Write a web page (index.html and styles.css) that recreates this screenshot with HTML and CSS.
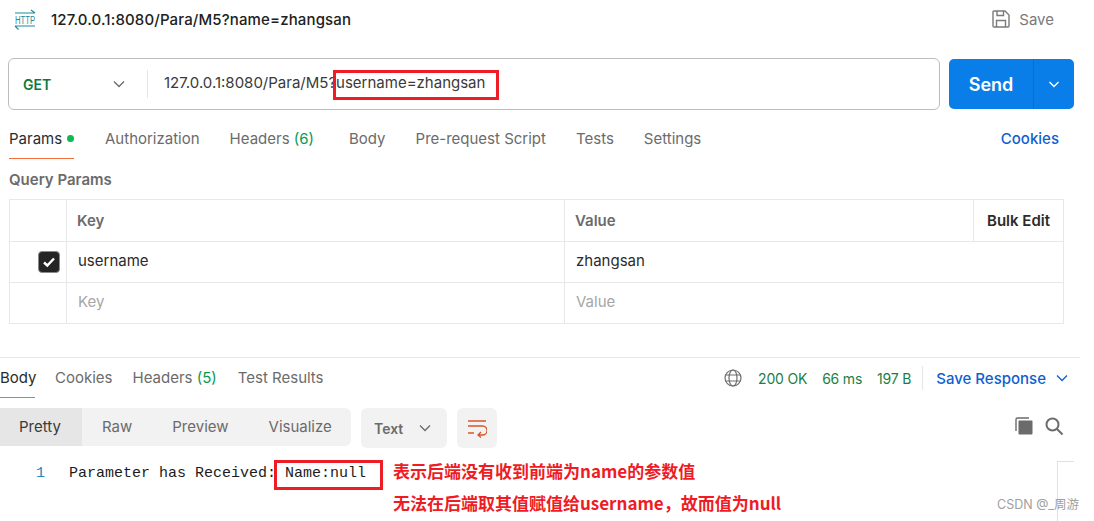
FILE: index.html
```html
<!DOCTYPE html>
<html lang="zh">
<head>
<meta charset="utf-8">
<title>Postman</title>
<link rel="stylesheet" href="styles.css">
</head>
<body>
<div class="page">
  <header class="head">
    <svg class="http-icon" width="24" height="24" viewBox="0 0 24 24" fill="none" stroke="#1f8a9c" stroke-width="1.100">
      <path d="M1 6h20M17 3l4 3M1 19h20M1 19l3.500 3.500"/>
      <text transform="translate(1 16.500) scale(.67 1)" class="http-text">HTTP</text>
    </svg>
    <span class="title">127.0.0.1:8080/Para/M5?name=zhangsan</span>
    <span class="save">
      <svg width="18" height="18" viewBox="0 0 18 18" fill="none" stroke="#7a7a7a" stroke-width="1.400">
        <path d="M1 2a1 1 0 0 1 1-1h11l4 4v11a1 1 0 0 1-1 1H2a1 1 0 0 1-1-1z"/>
        <path d="M5 1v4.500h6.500V1M4.500 17v-6.500h9V17"/>
      </svg>
      Save
    </span>
  </header>

  <section class="url-row">
    <div class="url-box">
      <div class="method"><span>GET</span>
        <svg class="chev" width="12" height="12" viewBox="0 0 12 12" fill="none" stroke="#6b6b6b" stroke-width="1.300"><path d="M1 3.500l5 5 5-5"/></svg>
      </div>
      <div class="url">127.0.0.1:8080/Para/M5?username=zhangsan</div>
    </div>
    <div class="send">
      <span class="send-label">Send</span>
      <span class="send-more"><svg width="12" height="12" viewBox="0 0 12 12" fill="none" stroke="#fff" stroke-width="1.300"><path d="M1.500 4l4.500 4.500L10.500 4"/></svg></span>
    </div>
  </section>

  <nav class="req-tabs">
    <span class="tab active">Params <i class="dot"></i></span>
    <span class="tab t-auth">Authorization</span>
    <span class="tab t-head">Headers <em>(6)</em></span>
    <span class="tab t-body">Body</span>
    <span class="tab t-pre">Pre-request Script</span>
    <span class="tab t-tests">Tests</span>
    <span class="tab t-set">Settings</span>
    <span class="cookies">Cookies</span>
  </nav>

  <div class="qp-title">Query Params</div>

  <div class="qp-table">
    <div class="row head-row">
      <div class="c-check"></div>
      <div class="c-key">Key</div>
      <div class="c-val">Value</div>
      <div class="c-bulk">Bulk Edit</div>
    </div>
    <div class="row body-row">
      <div class="c-check"><span class="checkbox"><svg width="14" height="12" viewBox="0 0 14 12" fill="none" stroke="#fff" stroke-width="2.400"><path d="M2 6.500l3.300 3L12 2.500"/></svg></span></div>
      <div class="c-key">username</div>
      <div class="c-val">zhangsan</div>
    </div>
    <div class="row body-row ph">
      <div class="c-check"></div>
      <div class="c-key">Key</div>
      <div class="c-val">Value</div>
    </div>
  </div>

  <section class="response">
    <div class="res-tabs">
      <span class="tab active">Body</span>
      <span class="tab rt-c">Cookies</span>
      <span class="tab rt-h">Headers <em>(5)</em></span>
      <span class="tab rt-t">Test Results</span>
      <div class="res-meta">
        <svg width="18" height="18" viewBox="0 0 18 18" fill="none" stroke="#6e6e6e" stroke-width="1.200">
          <circle cx="9" cy="9" r="8"/><ellipse cx="9" cy="9" rx="4" ry="8"/><path d="M1.500 6h15M1.500 12h15"/>
        </svg>
        <span class="ok first">200 OK</span>
        <span class="ok">66 ms</span>
        <span class="ok">197 B</span>
        <span class="sep"></span>
        <span class="save-res">Save Response</span>
        <svg class="sr-chev" width="12" height="12" viewBox="0 0 12 12" fill="none" stroke="#0f5fd0" stroke-width="1.300"><path d="M1 3.500l5 5 5-5"/></svg>
      </div>
    </div>

    <div class="toolbar">
      <div class="seg">
        <span class="seg-item on">Pretty</span>
        <span class="seg-item s-raw">Raw</span>
        <span class="seg-item s-prev">Preview</span>
        <span class="seg-item s-vis">Visualize</span>
      </div>
      <div class="fmt">Text
        <svg width="12" height="12" viewBox="0 0 12 12" fill="none" stroke="#6b6b6b" stroke-width="1.300"><path d="M1 3.500l5 5 5-5"/></svg>
      </div>
      <div class="wrap">
        <svg width="20" height="20" viewBox="0 0 20 20" fill="none" stroke="#d8552c" stroke-width="1.300">
          <path d="M1 3h18M1 8h14.500a4.500 4.500 0 0 1 0 9H11M14 14l-3 3 3 2.500M1 15h6"/>
        </svg>
      </div>
      <div class="tools">
        <svg width="20" height="20" viewBox="0 0 20 20"><path d="M2 15V3.500A1.500 1.500 0 0 1 3.500 2H15" fill="none" stroke="#6b6b6b" stroke-width="1.400"/><rect x="4.500" y="4.500" width="14" height="14" rx="1" fill="#6b6b6b"/></svg>
        <svg width="20" height="20" viewBox="0 0 20 20" fill="none" stroke="#6b6b6b" stroke-width="2"><circle cx="8.500" cy="8.500" r="6"/><path d="M13 13l5.500 5.500"/></svg>
      </div>
    </div>

    <div class="code">
      <span class="ln">1</span>
      <span class="code-text">Parameter has Received: Name:null</span>
    </div>
  </section>

  <p class="note n1">表示后端没有收到前端为name的参数值</p>
  <p class="note n2">无法在后端取其值赋值给username，故而值为null</p>
  <div class="mark m-url"></div>
  <div class="mark m-code"></div>
  <div class="scroll-stub"></div>
  <div class="wm">CSDN @_周游</div>
</div>
</body>
</html>
```
FILE: styles.css
```css
* { box-sizing: border-box; }
html, body { margin: 0; background: #fff; }
.page {
  position: relative;
  width: 1094px;
  height: 521px;
  overflow: hidden;
  font-family: Inter, "Noto Sans CJK SC", sans-serif;
  font-size: 15px;
  color: #6b6b6b;
}
.head {
  display: flex;
  align-items: center;
  height: 38px;
  padding: 0 40px 0 14px;
}
.http-icon { flex: none; }
.http-text { font: 400 11.500px "Liberation Sans", sans-serif; fill: #1f8a9c; stroke: none; }
.title { margin-left: 13px; color: #212121; font-weight: 500; letter-spacing: 0.14px; }
.save { margin-left: auto; display: flex; align-items: center; gap: 9px; color: #7a7a7a; }

.url-row { display: flex; margin: 20px 20px 0 8px; height: 52px; gap: 9px; align-items: center; }
.url-box {
  flex: 1;
  height: 52px;
  display: flex;
  align-items: center;
  border: 1px solid #bdbdbd;
  border-radius: 6px;
}
.method {
  width: 139px;
  height: 28px;
  padding-left: 14px;
  padding-right: 22px;
  display: flex;
  align-items: center;
  justify-content: space-between;
  border-right: 1px solid #e6e6e6;
  color: #0a7a3e;
  font-size: 14px;
  font-weight: 600;
}
.url { padding-left: 16px; color: #3a3a3a; margin-top: -3px; }
.send {
  width: 125px;
  height: 50px;
  display: flex;
  background: #0a7ee8;
  border-radius: 5px;
  color: #fff;
}
.send-label {
  width: 85px;
  display: flex;
  align-items: center;
  justify-content: center;
  font-size: 18px;
  font-weight: 600;
  border-right: 1px solid #0a6fcc;
}
.send-more { flex: 1; display: flex; align-items: center; justify-content: center; }

.req-tabs {
  display: flex;
  align-items: flex-start;
  height: 49px;
  margin: 0 35px 0 9px;
  padding-top: 18px;
}
.tab { display: inline-flex; align-items: center; height: 20px; white-space: pre; }
.tab em { font-style: normal; color: #0a9a50; }
.req-tabs .active { position: relative; color: #2b2b2b; width: 65px; }
.req-tabs .active::after {
  content: "";
  position: absolute;
  left: 0; right: 0; top: 30px;
  height: 1px;
  background: #f26b3a;
}
.dot { width: 7px; height: 7px; border-radius: 50%; background: #0cbb52; margin-left: 1px; }
.t-auth { margin-left: 31px; }
.t-head { margin-left: 30px; }
.t-body { margin-left: 35px; }
.t-pre { margin-left: 30px; }
.t-tests { margin-left: 30px; }
.t-set { margin-left: 30px; }
.cookies { margin-left: auto; color: #0f5fd0; font-weight: 500; height: 20px; display: inline-flex; align-items: center; }

.qp-title { margin: 11px 0 0 9px; height: 20px; line-height: 20px; font-weight: 600; }

.qp-table {
  margin: 9px 30px 0 9px;
  border: 1px solid #e8e8e8;
  width: 1055px;
}
.row { display: grid; grid-template-columns: 56px 498px 1fr; align-items: stretch; }
.head-row { grid-template-columns: 56px 498px 409px 1fr; height: 41px; font-weight: 600; }
.body-row { height: 41px; border-top: 1px solid #e8e8e8; color: #2b2b2b; }
.row > div { display: flex; align-items: center; padding-left: 11px; }
.body-row > .c-key, .body-row > .c-val { padding-bottom: 3px; }
.row > div + div { border-left: 1px solid #e8e8e8; }
.head-row > .c-key { padding-left: 10px; }
.head-row > .c-val { padding-left: 10px; }
.c-bulk { color: #2b2b2b; padding-left: 13px !important; }
.ph { color: #a6a6a6; }
.row > .c-check { padding: 0 6px 0 0; justify-content: flex-end; }
.checkbox {
  width: 22px;
  height: 22px;
  border-radius: 4px;
  background: #242424;
  border: 1px solid #8a8a8a;
  display: flex;
  align-items: center;
  justify-content: center;
}

.response { margin-top: 33px; width: 1080px; border-top: 1px solid #e8e8e8; }
.res-tabs { display: flex; align-items: flex-start; height: 50px; padding-top: 9px; }
.res-tabs .active { position: relative; color: #2b2b2b; width: 35px; }
.res-tabs .active::after {
  content: "";
  position: absolute;
  left: 0; right: 0; top: 30px;
  height: 1px;
  background: #f26b3a;
}
.rt-c { margin-left: 20px; }
.rt-h { margin-left: 20px; }
.rt-t { margin-left: 21px; }
.res-meta { margin-left: auto; display: flex; align-items: center; height: 20px; padding-right: 12px; margin-top: 1px; }
.ok { color: #1a7f47; margin-left: 15px; font-size: 14px; letter-spacing: -0.2px; }
.ok.first { margin-left: 16px; }
.sep { width: 1px; height: 24px; background: #e6e6e6; margin: 0 13px 0 11px; }
.save-res { color: #0f5fd0; font-weight: 500; }
.sr-chev { margin-left: 10px; }

.toolbar { display: flex; align-items: flex-start; height: 40px; }
.seg {
  width: 351px;
  height: 38px;
  display: flex;
  background: #f2f2f2;
  border-radius: 0 6px 6px 0;
}
.seg-item { display: flex; align-items: center; height: 38px; padding-bottom: 2px; }
.seg-item.on { width: 82px; padding-left: 19px; background: #e6e6e6; color: #3a3a3a; }
.s-raw { margin-left: 20px; }
.s-prev { margin-left: 40px; }
.s-vis { margin-left: 40px; }
.fmt {
  margin-left: 10px;
  width: 86px;
  height: 40px;
  padding: 0 16px 0 13px;
  background: #f2f2f2;
  border-radius: 6px;
  display: flex;
  align-items: center;
  justify-content: space-between;
  font-size: 14px;
  font-weight: 600;
}
.wrap {
  margin-left: 10px;
  width: 40px;
  height: 40px;
  background: #f2f2f2;
  border-radius: 6px;
  display: flex;
  align-items: center;
  justify-content: center;
}
.tools { margin-left: auto; display: flex; gap: 10px; padding: 8px 16px 0 0; }

.code { display: flex; align-items: center; height: 20px; margin-top: 16px; font: 15px/20px "Liberation Mono", monospace; }
.ln { width: 69px; padding-left: 36px; color: #2a86b8; }
.code-text { color: #1c1c1c; white-space: pre; }

.note {
  position: absolute;
  left: 393px;
  margin: 0;
  font: 700 17px/24px "Noto Sans CJK SC", sans-serif;
  color: #ee1c25;
  white-space: nowrap;
}
.n1 { top: 459px; }
.n2 { top: 491px; }
.mark { position: absolute; border: 3px solid #ee1c25; }
.m-url { left: 333px; top: 70px; width: 166px; height: 30px; }
.m-code { left: 274px; top: 460px; width: 109px; height: 30px; }
.scroll-stub {
  position: absolute;
  left: 1057px; top: 461px;
  width: 17px; height: 60px;
  border-left: 1px solid #e0e0e0;
  border-top: 1px solid #e0e0e0;
}
.wm { position: absolute; right: 15px; top: 496px; font-size: 12.500px; line-height: 18px; color: #a0a0a0; }
```
